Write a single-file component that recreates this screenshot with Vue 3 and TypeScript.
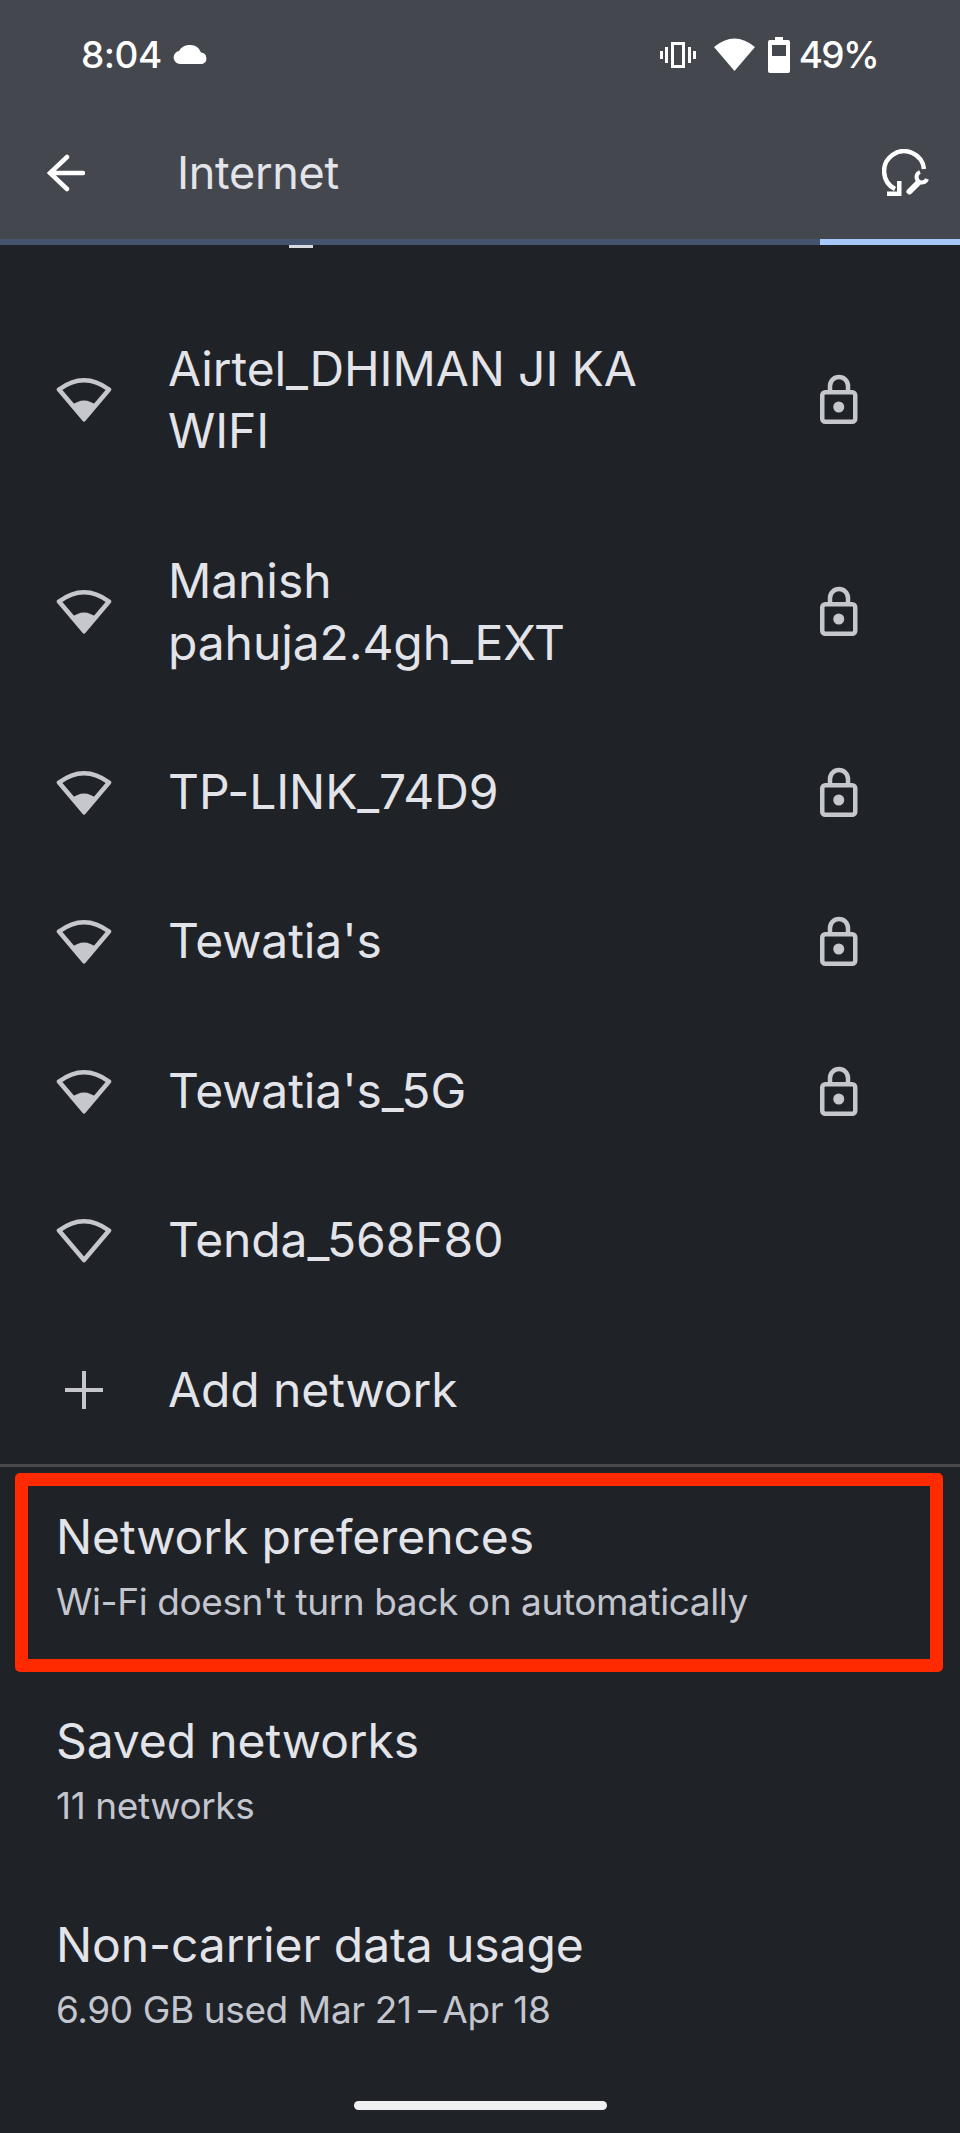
<script setup lang="ts">
interface Network {
  name: string[];
  secured: boolean;
}

interface Pref {
  title: string;
  summary: string;
}

const networks: Network[] = [
  { name: ["Airtel_DHIMAN JI KA", "WIFI"], secured: true },
  { name: ["Manish", "pahuja2.4gh_EXT"], secured: true },
  { name: ["TP-LINK_74D9"], secured: true },
  { name: ["Tewatia's"], secured: true },
  { name: ["Tewatia's_5G"], secured: true },
  { name: ["Tenda_568F80"], secured: false },
];

const prefs: Pref[] = [
  { title: "Network preferences", summary: "Wi-Fi doesn't turn back on automatically" },
  { title: "Saved networks", summary: "11 networks" },
  { title: "Non-carrier data usage", summary: "6.90 GB used Mar 21\u2009–\u2009Apr 18" },
];
</script>

<template>
  <div class="screen">
    <header class="appbar">
      <div class="status">
        <div class="status-left">
          <span class="clock">8:04</span>
          <svg class="cloud" viewBox="0 0 35 19" width="35" height="19">
            <path fill="#fff" d="M7 19a6.500 6.500 0 0 1-1-12.900A12 12 0 0 1 17 0a11.500 11.500 0 0 1 11 7.600A5.800 5.800 0 0 1 29 19z" />
          </svg>
        </div>
        <div class="status-right">
          <svg viewBox="0 0 36 26" width="36" height="26" fill="#fff">
            <path fill-rule="evenodd" d="M11 0h14v26H11zM14 3v20h8V3z" />
            <rect x="5" y="5" width="3" height="16" />
            <rect x="0" y="9" width="3" height="8" />
            <rect x="28" y="5" width="3" height="16" />
            <rect x="33" y="9" width="3" height="8" />
          </svg>
          <svg class="s-wifi" viewBox="0 0 41 33" width="41" height="33">
            <path fill="#fff" d="M20.500 33L0 9Q20.500 -8 41 9z" />
          </svg>
          <svg class="s-batt" viewBox="0 0 22 36" width="22" height="36">
            <path fill="#fff" fill-rule="evenodd" d="M7 0h8v3h5a2 2 0 0 1 2 2v29a2 2 0 0 1-2 2H2a2 2 0 0 1-2-2V5a2 2 0 0 1 2-2h5zM4 8v11h14V8z" />
          </svg>
          <span class="percent">49%</span>
        </div>
      </div>
      <div class="toolbar">
        <svg class="back" viewBox="0 0 38 38" width="38" height="38" fill="none" stroke="#fff" stroke-width="4.500" stroke-linecap="round">
          <path d="M3 19h33M20 3L3 19l17 16" />
        </svg>
        <span class="title">Internet</span>
        <svg class="repair" viewBox="0 0 48 47" width="48" height="47" fill="none" stroke="#fff">
          <path stroke-width="4.500" d="M42 20A20 20 0 1 0 13 40" />
          <path fill="#fff" stroke="none" d="M15 32h4.500v15H5v-4.500h10z" />
          <path stroke-width="6" stroke-linecap="round" d="M27.500 42.500L36 34" />
          <path stroke-width="4" d="M38 23A5.400 5.400 0 1 0 45 30" />
        </svg>
      </div>
    </header>
    <div class="progress"><div class="progress-fill"></div></div>
    <div class="peek"></div>

    <main class="list">
      <div v-for="net in networks" :key="net.name[0]" class="net-row" :class="{ tall: net.name.length > 1 }">
        <svg class="wifi" viewBox="0 0 56 46" width="56" height="46">
          <path fill="none" stroke="#c6c7cc" stroke-width="4.500" stroke-linejoin="round" d="M28 43L3 13.500Q28 -5 53 13.500z" />
          <path v-if="net.secured" fill="#c6c7cc" d="M28 46L15 30Q28 19 41 30z" />
        </svg>
        <div class="net-name">
          <div v-for="line in net.name" :key="line">{{ line }}</div>
        </div>
        <svg v-if="net.secured" class="lock" viewBox="0 0 38 50" width="38" height="50" fill="none" stroke="#c6c7cc" stroke-width="4.500">
          <rect x="2.250" y="18.250" width="33" height="29.500" rx="3" />
          <path d="M10 18v-6a9 9 0 0 1 18 0v6" />
          <circle cx="18.750" cy="33" r="5.500" fill="#c6c7cc" stroke="none" />
        </svg>
      </div>
      <div class="net-row">
        <svg class="wifi plus" viewBox="0 0 38 38" width="56" height="38" fill="none" stroke="#c6c7cc" stroke-width="4">
          <path d="M19 0v38M0 19h38" />
        </svg>
        <div class="net-name">Add network</div>
      </div>
    </main>

    <div class="divider"></div>

    <section class="prefs">
      <div v-for="pref in prefs" :key="pref.title" class="pref">
        <div class="pref-title">{{ pref.title }}</div>
        <div class="pref-summary">{{ pref.summary }}</div>
      </div>
      <div class="callout"></div>
    </section>

    <div class="home-bar"></div>
  </div>
</template>

<style>
html,
body {
  margin: 0;
  background: #1f2226;
}
</style>

<style scoped>
.screen {
  width: 960px;
  height: 2133px;
  overflow: hidden;
  display: flex;
  flex-direction: column;
  background: #1f2226;
  color: #e3e4e9;
  font-family: Inter, "Liberation Sans", sans-serif;
}

.appbar {
  height: 239px;
  flex: none;
  box-sizing: border-box;
  padding-top: 33px;
  background: #44474e;
}

.status {
  display: flex;
  justify-content: space-between;
  align-items: center;
  height: 43px;
  padding: 0 82px 0 81px;
  color: #fff;
  font-size: 37px;
  font-weight: 500;
}

.status-left,
.status-right {
  display: flex;
  align-items: center;
}

.clock {
  margin-right: 11px;
  letter-spacing: -0.5px;
}

.s-wifi {
  margin-left: 18px;
}

.s-batt {
  margin-left: 13px;
}

.percent {
  margin-left: 9px;
  letter-spacing: -1.7px;
}

.toolbar {
  display: flex;
  align-items: center;
  height: 47px;
  margin-top: 73px;
  padding: 0 30px 0 47px;
}

.title {
  margin-left: 92px;
  flex: 1;
  font-size: 45px;
  color: #e3e4e9;
  letter-spacing: -0.3px;
}

.progress {
  height: 6px;
  flex: none;
  background: #44536e;
  display: flex;
  justify-content: flex-end;
}

.progress-fill {
  width: 140px;
  background: #a8c7fa;
}

.peek {
  width: 24px;
  height: 3px;
  flex: none;
  margin-left: 289px;
  background: #d8dade;
}

.list {
  padding-top: 45px;
}

.net-row {
  display: flex;
  align-items: center;
  height: 149.5px;
  padding-left: 56px;
  padding-right: 102px;
}

.net-row.tall {
  height: 212px;
}

.tall .net-name {
  margin-top: 2px;
}

.wifi {
  flex: none;
  margin-right: 56px;
}

.net-name {
  flex: 1;
  font-size: 48px;
  line-height: 62px;
  letter-spacing: -0.1px;
}

.lock {
  flex: none;
}

.divider {
  height: 3px;
  flex: none;
  margin-top: -0.5px;
  background: #4a4a4d;
}

.prefs {
  position: relative;
  padding: 39px 56px 0;
}

.pref {
  height: 204px;
}

.pref-title {
  font-size: 48px;
  line-height: 62px;
  letter-spacing: -0.1px;
}

.pref-summary {
  margin-top: 3px;
  font-size: 37px;
  line-height: 62px;
  letter-spacing: -0.4px;
  color: #c4c6cf;
}

.callout {
  position: absolute;
  left: 15px;
  top: 6px;
  width: 928px;
  height: 199px;
  box-sizing: border-box;
  border: 13px solid #ff2a00;
  border-radius: 5px;
}

.home-bar {
  position: absolute;
  left: 354px;
  top: 2101px;
  width: 253px;
  height: 9px;
  border-radius: 5px;
  background: #eff0f2;
}
</style>
